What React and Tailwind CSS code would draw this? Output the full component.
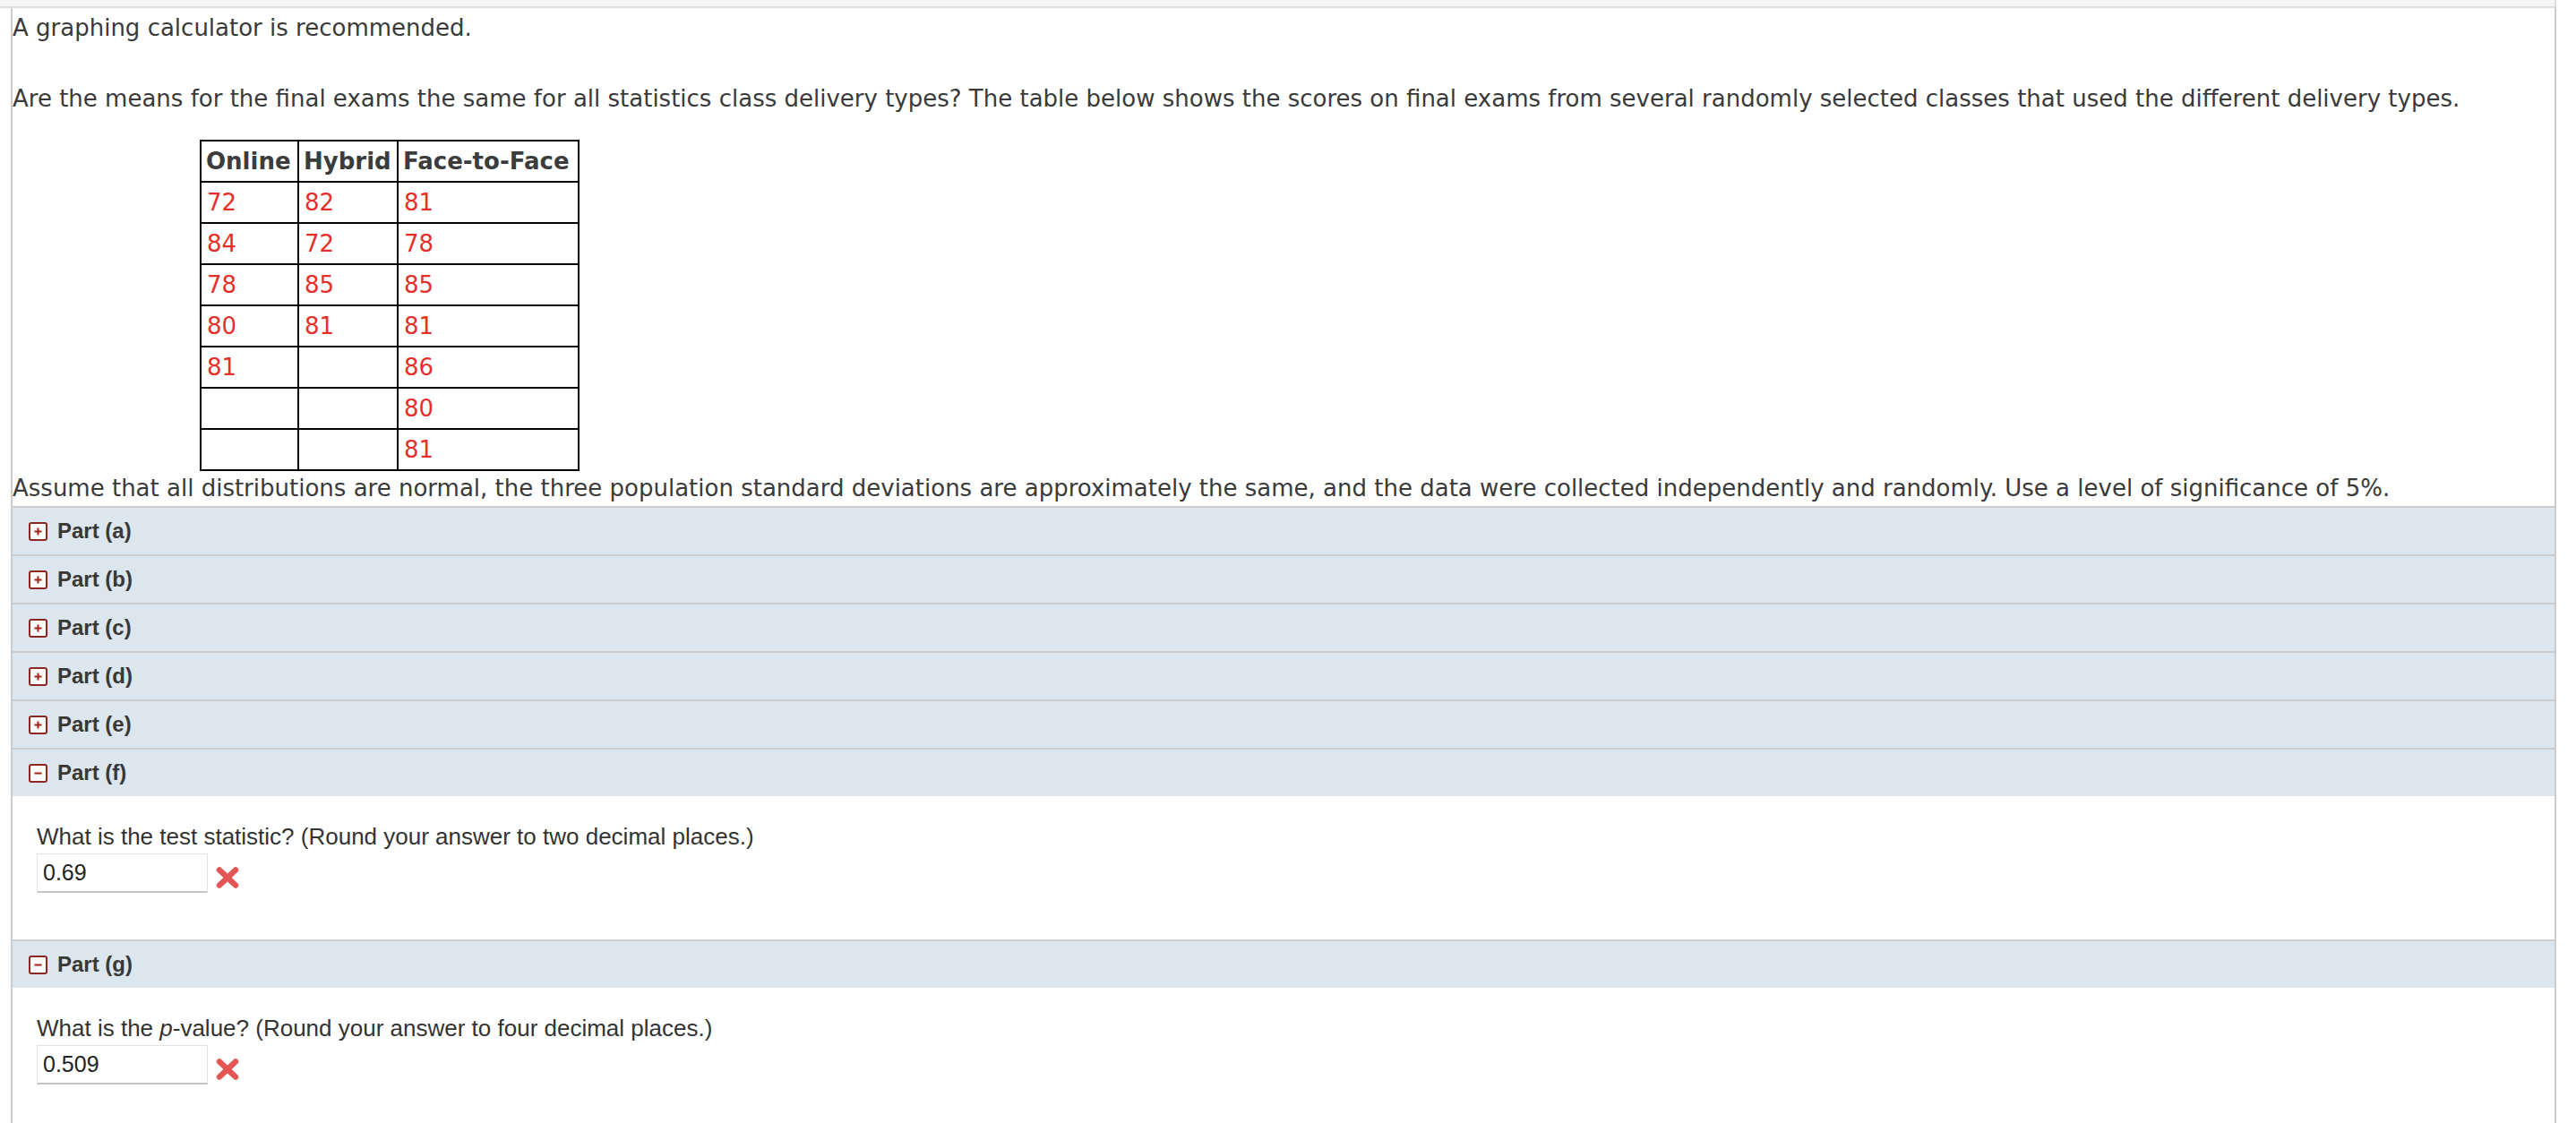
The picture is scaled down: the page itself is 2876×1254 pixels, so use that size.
import React from "react";

function Toggle({ open }) {
  return (
    <span className="w-[21px] h-[21px] rounded-[3px] border-2 border-[#8c2823] bg-[#fdfafa] flex items-center justify-center shrink-0">
      <svg width="11" height="11" viewBox="0 0 11 11">
        <path d={open ? "M1.5 5.5h8" : "M1.5 5.5h8M5.5 1.5v8"} stroke="#a3231d" strokeWidth="2" fill="none" />
      </svg>
    </span>
  );
}

function XMark() {
  return (
    <svg width="28" height="26" viewBox="0 0 28 26" className="ml-[8px] mt-[14px] shrink-0">
      <g stroke="#e45656" strokeWidth="6.5" strokeLinecap="round">
        <path d="M5 4.5 L23 21.5" />
        <path d="M23 4.5 L5 21.5" />
      </g>
    </svg>
  );
}

function PartHeader({ label, open }) {
  return (
    <div className="h-[54px] border-t-2 border-[#cccccc] bg-[#dce6ef] flex items-center pl-[18px] gap-[11px]">
      <Toggle open={open} />
      <span className="font-['Liberation_Sans',Arial,sans-serif] font-bold text-[24px] text-[#383838]">{label}</span>
    </div>
  );
}

function AnswerBox({ value }) {
  return (
    <div className="flex items-start mt-[4px]">
      <div className="w-[191px] h-[44px] border border-[#e2e2e2] border-b-2 border-b-[#c4c4c4] bg-white flex items-center pl-[6px] text-[25px] text-[#222] font-['Liberation_Sans',Arial,sans-serif]">
        {value}
      </div>
      <XMark />
    </div>
  );
}

const rows = [
  ["72", "82", "81"],
  ["84", "72", "78"],
  ["78", "85", "85"],
  ["80", "81", "81"],
  ["81", "", "86"],
  ["", "", "80"],
  ["", "", "81"],
];

export default function App() {
  return (
    <div className="w-[2876px] min-h-[1254px] bg-white">
      <div className="h-[9px] w-[2854px] bg-[#f5f5f5] border-b-2 border-r-2 border-[#dddddd]" />
      <div className="ml-[12px] w-[2842px] min-h-[1245px] border-l-2 border-r-2 border-[#cccccc]">
        <div className="pt-[3px] font-['DejaVu_Sans',Verdana,sans-serif] text-[26px] leading-[39px] text-[#3a3a3a]">
          <p>A graphing calculator is recommended.</p>
          <p className="mt-[40px]">
            Are the means for the final exams the same for all statistics class delivery types? The table below shows the scores on final exams from several randomly selected classes that used the different delivery types.
          </p>
          <div className="mt-[26px] ml-[209px] w-[424px] bg-black p-[2px] grid grid-cols-[107px_109px_200px] gap-[2px]">
            {["Online", "Hybrid", "Face-to-Face"].map((h) => (
              <div key={h} className="bg-white h-[44px] flex items-center pl-[5px] font-bold text-[#3c3c3c] whitespace-nowrap">
                {h}
              </div>
            ))}
            {rows.map((r, i) =>
              r.map((c, j) => (
                <div key={i + "-" + j} className="bg-white h-[44px] flex items-center pl-[6px] text-[#e5302a]">
                  {c}
                </div>
              ))
            )}
          </div>
          <p className="whitespace-nowrap">
            Assume that all distributions are normal, the three population standard deviations are approximately the same, and the data were collected independently and randomly. Use a level of significance of 5%.
          </p>
        </div>

        <PartHeader label="Part (a)" />
        <PartHeader label="Part (b)" />
        <PartHeader label="Part (c)" />
        <PartHeader label="Part (d)" />
        <PartHeader label="Part (e)" />
        <PartHeader label="Part (f)" open />
        <div className="pl-[27px] pt-[30px] pb-[52px] font-['Liberation_Sans',Arial,sans-serif] text-[#333]">
          <p className="text-[26px] leading-[30px]">What is the test statistic? (Round your answer to two decimal places.)</p>
          <AnswerBox value="0.69" />
        </div>
        <PartHeader label="Part (g)" open />
        <div className="pl-[27px] pt-[30px] pb-[40px] font-['Liberation_Sans',Arial,sans-serif] text-[#333]">
          <p className="text-[26px] leading-[30px]">
            What is the <i>p</i>-value? (Round your answer to four decimal places.)
          </p>
          <AnswerBox value="0.509" />
        </div>
      </div>
    </div>
  );
}
